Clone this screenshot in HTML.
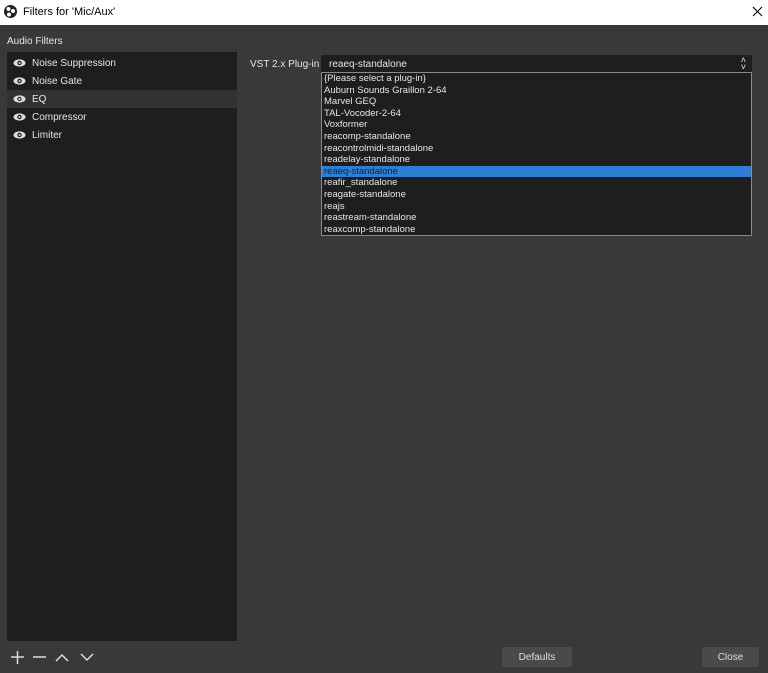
<!DOCTYPE html><html><head><style>
body{margin:0;width:768px;height:673px;background:#3a3939;font-family:"Liberation Sans",sans-serif;font-size:10px;color:#e6e6e6;position:relative;overflow:hidden}
.t{position:absolute;left:0;top:0;width:768px;height:25px;background:#fff;color:#000;font-size:11px}
.a{position:absolute}
.list{left:7px;top:52px;width:230px;height:589px;background:#1f1e1e}
.it{position:absolute;left:0;width:230px;height:18px;line-height:19px}
.it span{position:absolute;left:25px}
.eye{position:absolute;left:6px;top:5px}
.pop{left:321px;top:72px;width:431px;height:164px;background:#1e1e1e;border:1px solid #8a8a8a;box-sizing:border-box}
.pop div{height:11.6px;line-height:11.6px;padding-left:2px;font-size:9.5px}
.btn{background:#4a4a4a;border-radius:2px;text-align:center;line-height:22px;color:#ddd}
</style></head><body>
<div class="t"><svg class="a" style="left:4px;top:5px" width="13" height="13" viewBox="0 0 13 13"><circle cx="6.5" cy="6.5" r="6.5" fill="#222"/><circle cx="4.5" cy="4" r="2" fill="#fff"/><circle cx="9" cy="6" r="2" fill="#fff"/><circle cx="5" cy="9.5" r="2" fill="#fff"/></svg><span class="a" style="left:23px;top:6px">Filters for 'Mic/Aux'</span><svg class="a" style="left:752px;top:6px" width="11" height="11" viewBox="0 0 11 11" stroke="#000" stroke-width="1.1"><path d="M1 1l9 9M10 1l-9 9"/></svg></div>
<div class="a" style="left:7px;top:36px">Audio Filters</div>
<div class="a list">
<div class="it" style="top:2px"><svg class="eye" width="13" height="8" viewBox="0 0 13 8"><ellipse cx="6.5" cy="4" rx="6" ry="3.6" fill="#ddd"/><circle cx="6.5" cy="4" r="2.2" fill="#1f1e1e"/><circle cx="6.5" cy="4" r="1" fill="#ddd"/></svg><span>Noise Suppression</span></div>
<div class="it" style="top:20px"><svg class="eye" width="13" height="8" viewBox="0 0 13 8"><ellipse cx="6.5" cy="4" rx="6" ry="3.6" fill="#ddd"/><circle cx="6.5" cy="4" r="2.2" fill="#1f1e1e"/><circle cx="6.5" cy="4" r="1" fill="#ddd"/></svg><span>Noise Gate</span></div>
<div class="it" style="top:38px;background:#323232"><svg class="eye" width="13" height="8" viewBox="0 0 13 8"><ellipse cx="6.5" cy="4" rx="6" ry="3.6" fill="#ddd"/><circle cx="6.5" cy="4" r="2.2" fill="#323232"/><circle cx="6.5" cy="4" r="1" fill="#ddd"/></svg><span>EQ</span></div>
<div class="it" style="top:56px"><svg class="eye" width="13" height="8" viewBox="0 0 13 8"><ellipse cx="6.5" cy="4" rx="6" ry="3.6" fill="#ddd"/><circle cx="6.5" cy="4" r="2.2" fill="#1f1e1e"/><circle cx="6.5" cy="4" r="1" fill="#ddd"/></svg><span>Compressor</span></div>
<div class="it" style="top:74px"><svg class="eye" width="13" height="8" viewBox="0 0 13 8"><ellipse cx="6.5" cy="4" rx="6" ry="3.6" fill="#ddd"/><circle cx="6.5" cy="4" r="2.2" fill="#1f1e1e"/><circle cx="6.5" cy="4" r="1" fill="#ddd"/></svg><span>Limiter</span></div>
</div>
<div class="a" style="left:250px;top:59px">VST 2.x Plug-in</div>
<div class="a" style="left:321px;top:55px;width:431px;height:17px;background:#1e1e1e;border-radius:2px"><span class="a" style="left:8px;top:4px">reaeq-standalone</span><span class="a" style="right:6px;top:2px;font-size:9px;line-height:7px">˄<br>˅</span></div>
<div class="a pop">
<div>{Please select a plug-in}</div><div>Auburn Sounds Graillon 2-64</div><div>Marvel GEQ</div><div>TAL-Vocoder-2-64</div><div>Voxformer</div><div>reacomp-standalone</div><div>reacontrolmidi-standalone</div><div>readelay-standalone</div><div style="background:#2d7fd6;color:#123">reaeq-standalone</div><div>reafir_standalone</div><div>reagate-standalone</div><div>reajs</div><div>reastream-standalone</div><div>reaxcomp-standalone</div>
</div>
<svg class="a" style="left:8px;top:650px" width="90" height="14" viewBox="0 0 90 14" stroke="#ddd" stroke-width="1.5" fill="none"><path d="M3 7h13M9.5 1v13"/><path d="M25 7h13"/><path d="M48 11l6-6 6 6"/><path d="M73 4l6 6 6-6"/></svg>
<div class="a btn" style="left:502px;top:647px;width:70px;height:20px">Defaults</div>
<div class="a btn" style="left:702px;top:647px;width:57px;height:20px">Close</div>
</body></html>
